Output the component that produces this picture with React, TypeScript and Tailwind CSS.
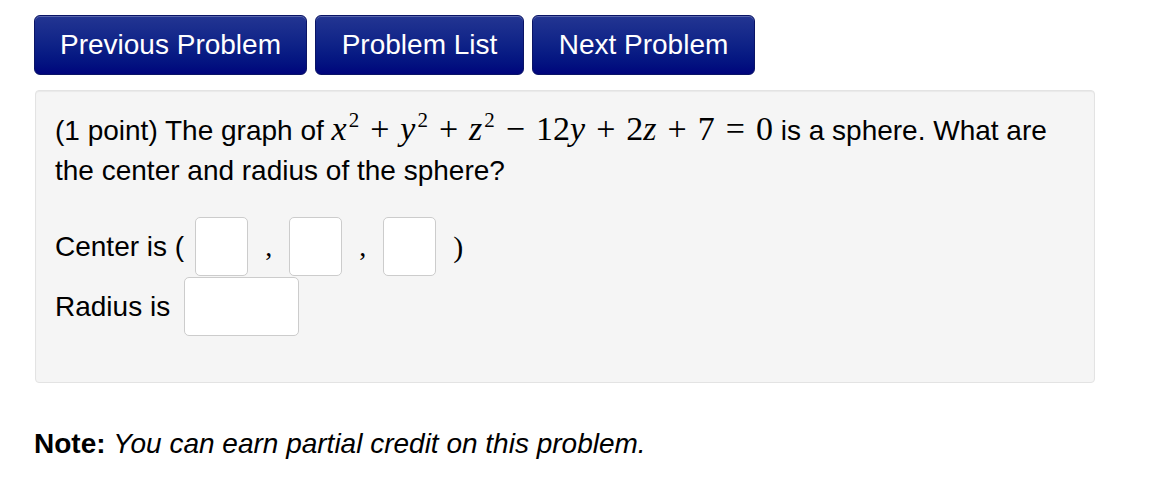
export default function App() {
  const btn =
    "rounded-[6px] border border-[#0a1466] bg-gradient-to-b from-[#233592] to-[#00047c] h-[60px] text-[28px] leading-none text-white shadow-[inset_0_1px_0_rgba(255,255,255,0.25)]";
  const box =
    "inline-block rounded-[5px] border border-[#cccccc] bg-white align-middle";
  const sup = "relative -top-[13px] ml-[2px] text-[21px] leading-none not-italic";
  const op = "mx-[11px]";

  return (
    <div className="min-h-screen bg-white font-['Liberation_Sans',Arial,sans-serif] text-black">
      <div className="w-[1095px] pl-[34px] pt-[15px]">
        <div className="flex gap-[8px]">
          <button className={`${btn} w-[273px]`}>Previous Problem</button>
          <button className={`${btn} w-[209px]`}>Problem List</button>
          <button className={`${btn} w-[223px]`}>Next Problem</button>
        </div>

        <div className="mt-[15px] ml-px rounded-[4px] border border-[#e3e3e3] bg-[#f5f5f5] px-[19px] pt-[20px] pb-[46px] text-[28px] leading-[40px] shadow-[inset_0_1px_1px_rgba(0,0,0,0.05)]">
          <p>
            (1 point) The graph of{" "}
            <span className="font-['Liberation_Serif',serif] text-[34px] leading-none">
              <i>x</i>
              <span className={sup}>2</span>
              <span className={op}>+</span>
              <i>y</i>
              <span className={sup}>2</span>
              <span className={op}>+</span>
              <i>z</i>
              <span className={sup}>2</span>
              <span className={op}>−</span>
              12<i>y</i>
              <span className={op}>+</span>
              2<i>z</i>
              <span className={op}>+</span>7
              <span className={op}>=</span>0
            </span>{" "}
            is a sphere. What are the center and radius of the sphere?
          </p>

          <div className="mt-[26px] flex items-center">
            <span>Center is (</span>
            <span className={`${box} ml-[11px] h-[59px] w-[53px]`} />
            <span className="mx-[17px] font-['Liberation_Serif',serif]">,</span>
            <span className={`${box} h-[59px] w-[53px]`} />
            <span className="mx-[17px] font-['Liberation_Serif',serif]">,</span>
            <span className={`${box} h-[59px] w-[53px]`} />
            <span className="ml-[17px] font-['Liberation_Serif',serif] text-[30px]">)</span>
          </div>

          <div className="mt-[1px] flex items-center">
            <span>Radius is</span>
            <span className={`${box} ml-[14px] h-[59px] w-[115px]`} />
          </div>
        </div>

        <p className="mt-[45px] text-[28px] leading-[32px]">
          <b>Note:</b> <i>You can earn partial credit on this problem.</i>
        </p>
      </div>
    </div>
  );
}
